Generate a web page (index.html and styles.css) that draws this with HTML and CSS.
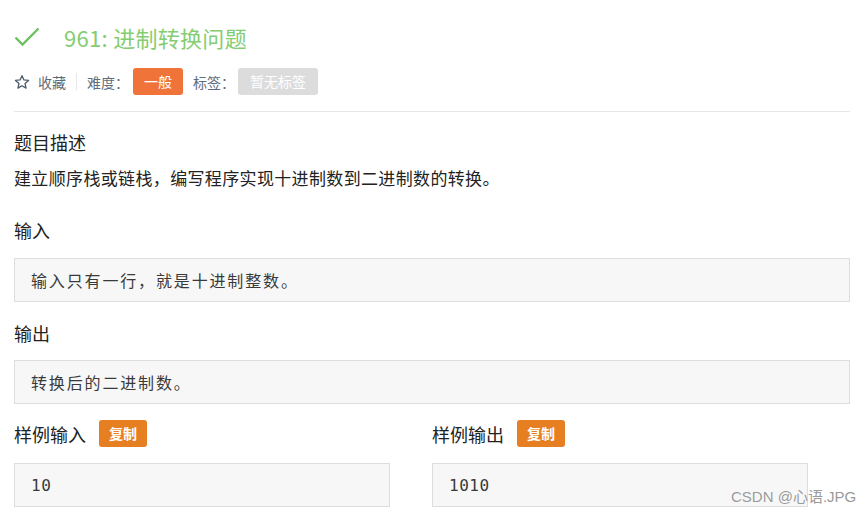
FILE: index.html
```html
<!DOCTYPE html>
<html lang="zh-CN">
<head>
<meta charset="utf-8">
<title>961: 进制转换问题</title>
<link rel="stylesheet" href="styles.css">
</head>
<body>
<div class="page">
  <h1 class="title">
    <svg class="check" width="26" height="20" viewBox="0 0 26 20"><path d="M1.5 10.5 L8.5 17.5 L24.5 1.5" fill="none" stroke="#6cc160" stroke-width="2.4"/></svg>
    <span class="title-text">961: 进制转换问题</span>
  </h1>
  <div class="meta">
    <span class="fav">
      <svg class="star" width="16" height="16" viewBox="0 0 24 24"><path d="M12 2.5 L14.9 8.9 L21.8 9.6 L16.6 14.3 L18.1 21.2 L12 17.6 L5.9 21.2 L7.4 14.3 L2.2 9.6 L9.1 8.9 Z" fill="none" stroke="#4e5d6c" stroke-width="2" stroke-linejoin="round"/></svg>
      收藏
    </span>
    <span class="sep"></span>
    <span class="label">难度：</span>
    <span class="badge badge-diff">一般</span>
    <span class="label label-tag">标签：</span>
    <span class="badge badge-none">暂无标签</span>
  </div>
  <hr class="rule">
  <h2 class="heading h-desc">题目描述</h2>
  <p class="desc">建立顺序栈或链栈，编写程序实现十进制数到二进制数的转换。</p>
  <h2 class="heading h-in">输入</h2>
  <div class="box">输入只有一行，就是十进制整数。</div>
  <h2 class="heading h-out">输出</h2>
  <div class="box">转换后的二进制数。</div>
  <div class="samples">
    <div class="sample">
      <div class="sample-head"><span class="heading-inline">样例输入</span><span class="copy">复制</span></div>
      <div class="box box-sample">10</div>
    </div>
    <div class="sample">
      <div class="sample-head"><span class="heading-inline">样例输出</span><span class="copy">复制</span></div>
      <div class="box box-sample">1010</div>
    </div>
  </div>
</div>
<div class="watermark">CSDN @心语.JPG</div>
</body>
</html>
```

FILE: styles.css
```css
html, body {
  margin: 0;
  padding: 0;
  background: #fff;
}
body {
  font-family: "Noto Sans CJK SC", "Noto Sans", sans-serif;
  color: #333;
  position: relative;
  min-height: 513px;
  overflow: hidden;
}
.page {
  width: 836px;
  padding: 22px 0 0 14px;
}
.title {
  margin: 0;
  height: 30px;
  display: flex;
  align-items: center;
  font-weight: normal;
  font-size: 22px;
  line-height: 30px;
}
.check {
  display: block;
}
.title-text {
  margin-left: 24px;
  color: #84cd72;
  font-family: "Noto Sans CJK SC", sans-serif;
  letter-spacing: 0.3px;
}
.meta {
  margin-top: 16px;
  height: 27px;
  display: flex;
  align-items: center;
  font-size: 14px;
  color: #5e6d7c;
}
.fav {
  display: flex;
  align-items: center;
}
.star {
  margin-right: 8px;
}
.sep {
  width: 1px;
  height: 17px;
  background: #e6e6e6;
  margin: 0 10px;
}
.badge {
  display: inline-block;
  height: 27px;
  line-height: 27px;
  border-radius: 3px;
  color: #fff;
  padding: 0 11px;
}
.badge-diff {
  background: #f0733a;
  margin-left: 4px;
}
.badge-none {
  background: #dcdcdc;
  padding: 0 12px;
  margin-left: 3px;
}
.label-tag {
  margin-left: 10px;
}
.rule {
  margin: 16px 0 0 0;
  border: 0;
  height: 1px;
  background: #e6e6e6;
}
.heading {
  margin: 0;
  font-weight: normal;
  font-size: 18px;
  line-height: 24px;
  color: #222;
}
.h-desc {
  margin-top: 18px;
}
.desc {
  margin: 12px 0 0 0;
  font-size: 17px;
  line-height: 24px;
  letter-spacing: 0.35px;
  color: #222;
}
.h-in {
  margin-top: 28px;
  margin-bottom: 16px;
}
.h-out {
  margin-top: 19px;
  margin-bottom: 15px;
}
.box {
  box-sizing: border-box;
  height: 44px;
  border: 1px solid #dddddd;
  background: #f7f7f7;
  padding: 0 16px;
  display: flex;
  align-items: center;
  font-family: "DejaVu Sans Mono", "Noto Sans CJK SC", monospace;
  font-size: 16px;
  letter-spacing: 1.85px;
  color: #3a3a3a;
}
.samples {
  margin-top: 16px;
  display: grid;
  grid-template-columns: 418px 418px;
}
.sample-head {
  height: 27px;
  display: flex;
  align-items: center;
}
.heading-inline {
  font-size: 18px;
  line-height: 24px;
  color: #222;
}
.copy {
  margin-left: 13px;
  height: 27px;
  line-height: 27px;
  padding: 0 10px;
  background: #e67f22;
  color: #fff;
  font-size: 14px;
  font-weight: bold;
  border-radius: 3px;
}
.box-sample {
  width: 376px;
  margin-top: 16px;
  letter-spacing: 0.5px;
}
.watermark {
  position: absolute;
  left: 731px;
  top: 486px;
  font-family: "Liberation Sans", "Noto Sans CJK SC", sans-serif;
  font-size: 15px;
  line-height: 22px;
  color: #9a9a9a;
  text-shadow: 0 0 1px #fff;
}
```
